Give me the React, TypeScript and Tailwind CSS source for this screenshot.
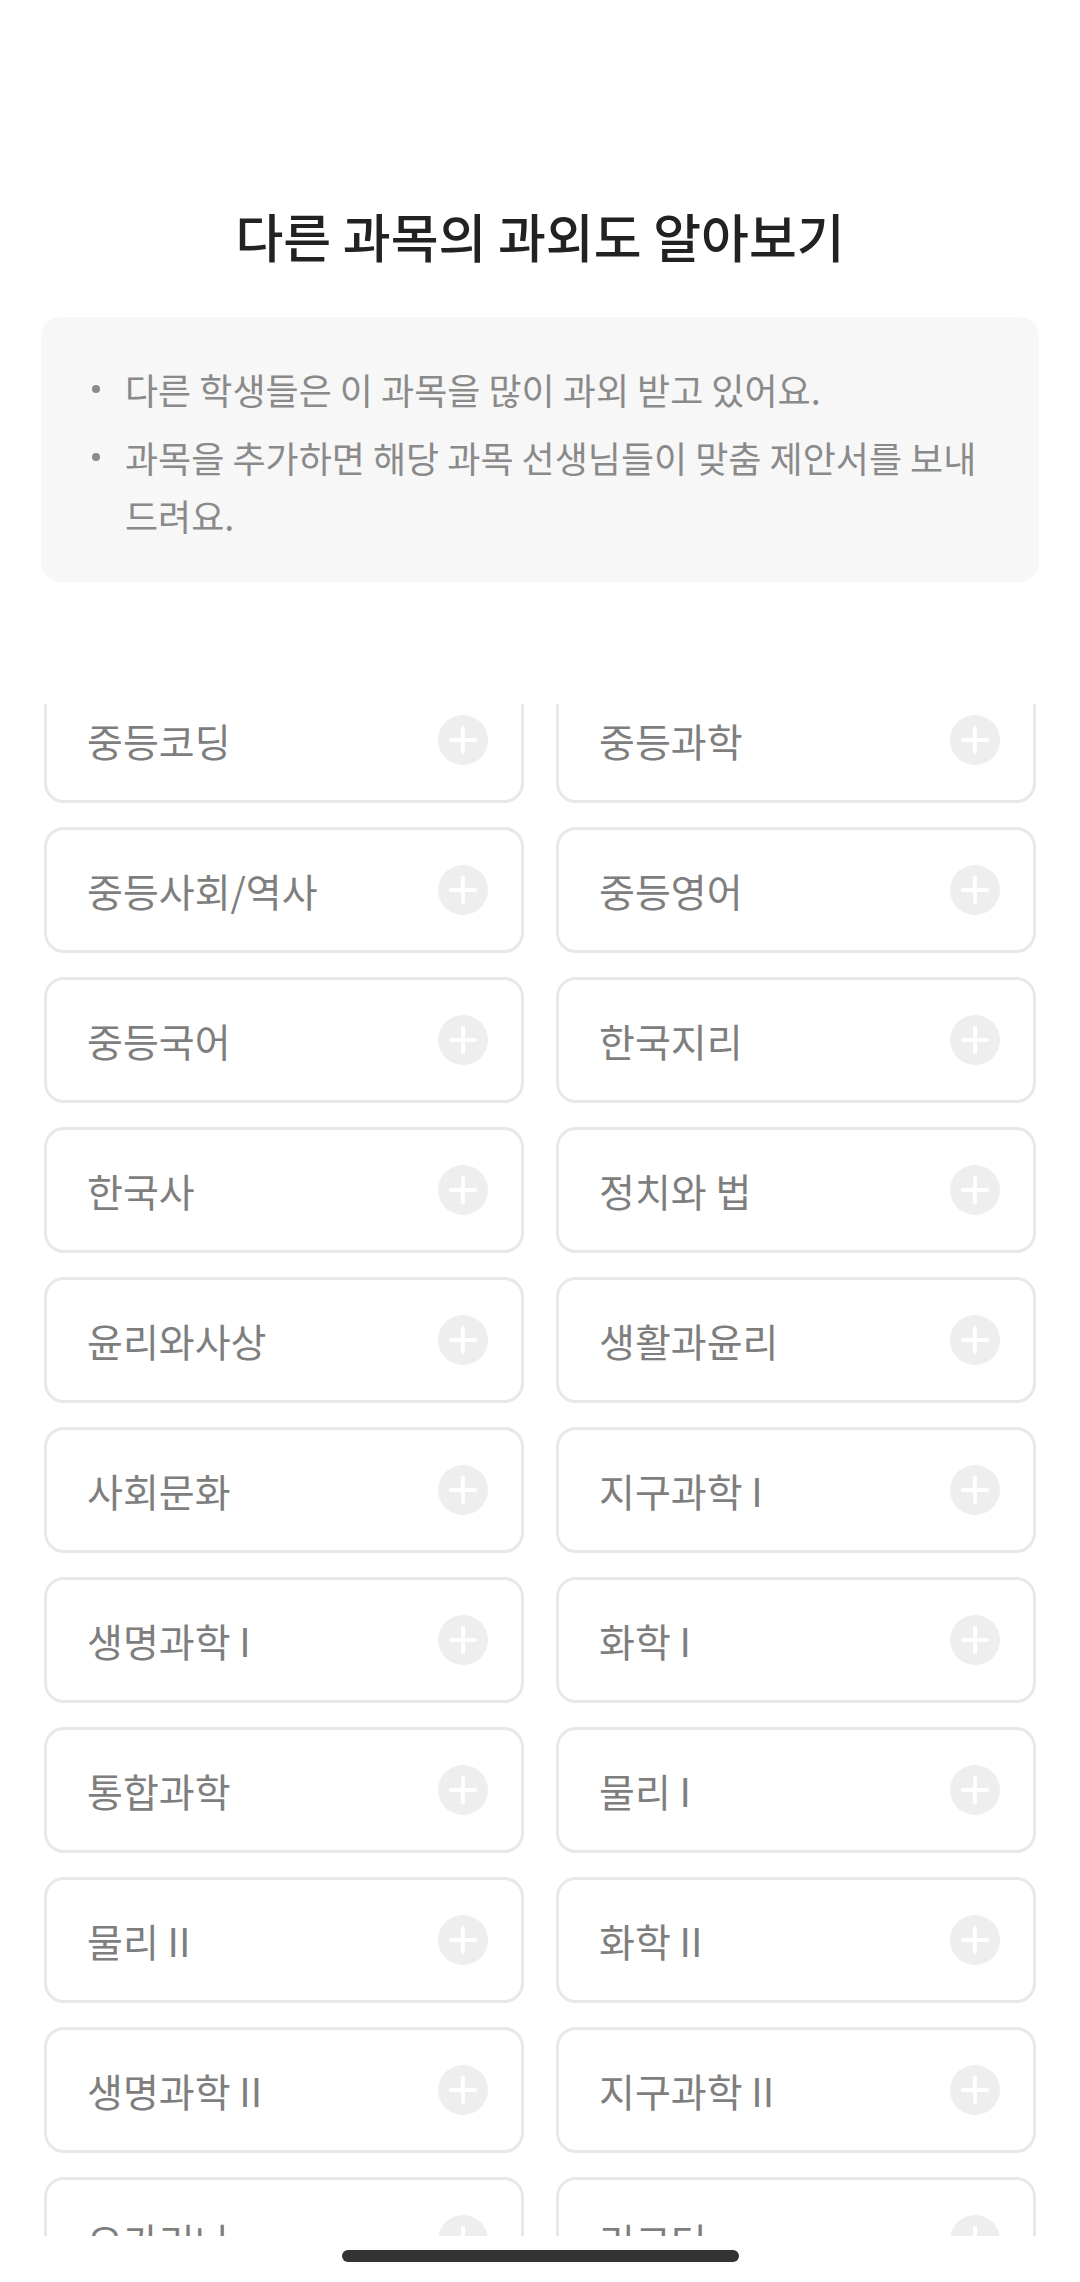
import type { JSX } from "react";

const SUBJECTS: string[] = [
  "중등코딩",
  "중등과학",
  "중등사회/역사",
  "중등영어",
  "중등국어",
  "한국지리",
  "한국사",
  "정치와 법",
  "윤리와사상",
  "생활과윤리",
  "사회문화",
  "지구과학 I",
  "생명과학 I",
  "화학 I",
  "통합과학",
  "물리 I",
  "물리 II",
  "화학 II",
  "생명과학 II",
  "지구과학 II",
  "오카리나",
  "리코더",
];

const NOTES: string[] = [
  "다른 학생들은 이 과목을 많이 과외 받고 있어요.",
  "과목을 추가하면 해당 과목 선생님들이 맞춤 제안서를 보내 드려요.",
];

function PlusCircle(): JSX.Element {
  return (
    <span className="flex h-[50px] w-[50px] shrink-0 items-center justify-center rounded-full bg-[#eeeeee]">
      <svg width="50" height="50" viewBox="0 0 50 50" fill="none">
        <path d="M25 13v24M13 25h24" stroke="#ffffff" strokeWidth="4" strokeLinecap="round" />
      </svg>
    </span>
  );
}

function SubjectCard({ name }: { name: string }): JSX.Element {
  return (
    <button
      type="button"
      className="flex h-[126px] items-center justify-between rounded-[20px] border-[3px] border-[#e8e8e8] bg-white pl-[40px] pr-[33px] text-left"
    >
      <span className="text-[39px] leading-none text-[#7e7e7e]">{name}</span>
      <PlusCircle />
    </button>
  );
}

export default function App(): JSX.Element {
  return (
    <div
      className="flex h-[2282px] w-[1080px] flex-col overflow-hidden bg-white"
      style={{ fontFamily: '"Noto Sans CJK KR", "Noto Sans", sans-serif' }}
    >
      <h1 className="pt-[204px] text-center text-[52px] font-medium leading-[64px] text-[#222222]">
        다른 과목의 과외도 알아보기
      </h1>

      <div className="mx-[41px] mt-[49px] rounded-[20px] bg-[#f7f7f7] pb-[38px] pl-[40px] pr-[42px] pt-[43px]">
        <ul className="flex flex-col gap-[10px]">
          {NOTES.map((n) => (
            <li key={n} className="flex gap-[14px]">
              <span className="flex h-[58px] w-[30px] shrink-0 items-center justify-center">
                <span className="h-[8px] w-[8px] rounded-full bg-[#8a8a8a]" />
              </span>
              <span className="text-[36px] leading-[58px] text-[#8a8a8a]">{n}</span>
            </li>
          ))}
        </ul>
      </div>

      <div className="mt-[122px] h-[1532px] shrink-0 overflow-hidden px-[44px]">
        <div className="-mt-[27px] grid grid-cols-2 gap-x-[32px] gap-y-[24px]">
          {SUBJECTS.map((s) => (
            <SubjectCard key={s} name={s} />
          ))}
        </div>
      </div>

      <div className="mx-auto mt-[14px] h-[12px] w-[397px] rounded-full bg-[#333333]" />
    </div>
  );
}
